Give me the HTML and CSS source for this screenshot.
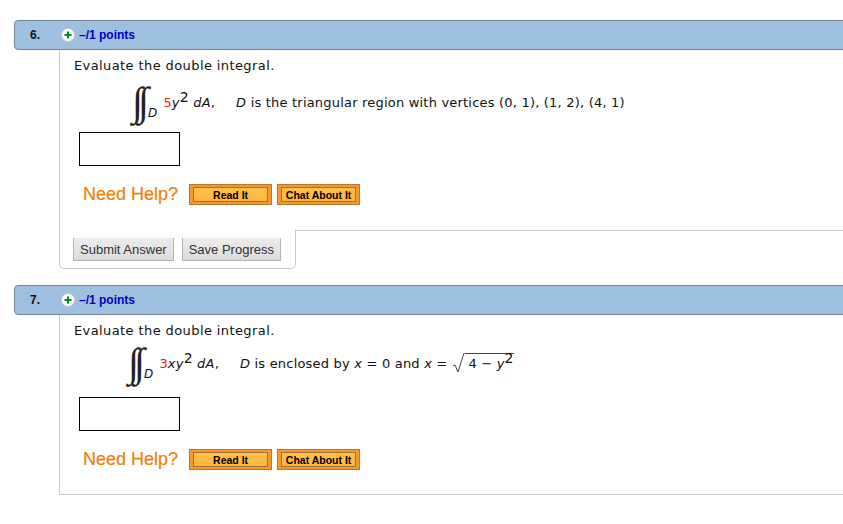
FILE: index.html
```html
<!DOCTYPE html>
<html lang="en">
<head>
    <meta charset="UTF-8">
    <meta name="viewport" content="width=device-width, initial-scale=1.0">
    <title>Double integrals</title>
    <link rel="stylesheet" href="styles.css">
</head>
<body>
    <div class="page">
        <div class="question">
            <div class="question-head">
                <span class="number">6.</span>
                <svg class="plus" width="16" height="16" viewBox="0 0 16 16">
                    <circle cx="8" cy="8" r="6.5" fill="#fff" stroke="#c4ccd4"/>
                    <path d="M8 4.5v7M4.5 8h7" stroke="#0a8a0a" stroke-width="2"/>
                </svg>
                <a class="points" href="#">&ndash;/1 points</a>
            </div>
            <div class="question-body">
                <p class="prompt">Evaluate the double integral.</p>
                <div class="math math-six">
                    <span class="integral">&int;&int;</span>
                    <i class="region">D</i>
                    <span class="integrand"><span class="red">5</span><i>y</i><sup>2</sup> <i>dA</i>,</span>
                    <span class="statement"><i>D</i> is the triangular region with vertices (0, 1), (1, 2), (4, 1)</span>
                </div>
                <input class="answer" type="text">
                <div class="help">
                    <span class="need-help">Need Help?</span>
                    <a class="help-button" href="#"><span>Read It</span></a>
                    <a class="help-button" href="#"><span>Chat About It</span></a>
                </div>
            </div>
            <div class="footer-row">
                <div class="actions">
                    <button>Submit Answer</button>
                    <button>Save Progress</button>
                </div>
                <div class="footer-rest"></div>
            </div>
        </div>

        <div class="question">
            <div class="question-head">
                <span class="number">7.</span>
                <svg class="plus" width="16" height="16" viewBox="0 0 16 16">
                    <circle cx="8" cy="8" r="6.5" fill="#fff" stroke="#c4ccd4"/>
                    <path d="M8 4.5v7M4.5 8h7" stroke="#0a8a0a" stroke-width="2"/>
                </svg>
                <a class="points" href="#">&ndash;/1 points</a>
            </div>
            <div class="question-body closed">
                <p class="prompt">Evaluate the double integral.</p>
                <div class="math math-seven">
                    <span class="integral">&int;&int;</span>
                    <i class="region">D</i>
                    <span class="integrand"><span class="red">3</span><i>xy</i><sup>2</sup> <i>dA</i>,</span>
                    <span class="statement"><i>D</i> is enclosed by <i>x</i> = 0 and <i>x</i> =</span>
                    <svg class="radical" width="13" height="22" viewBox="0 0 13 22">
                        <path d="M1 14l2-1 3 7 6-19" fill="none" stroke="#444" stroke-width="1"/>
                    </svg>
                    <span class="radicand">4 &minus; <i>y</i><sup>2</sup></span>
                </div>
                <input class="answer" type="text">
                <div class="help">
                    <span class="need-help">Need Help?</span>
                    <a class="help-button" href="#"><span>Read It</span></a>
                    <a class="help-button" href="#"><span>Chat About It</span></a>
                </div>
            </div>
        </div>
    </div>
</body>
</html>
```

FILE: styles.css
```css
html, body {
    margin: 0;
    padding: 0;
    background-color: #fff;
    overflow: hidden;
}
.page {
    width: 843px;
    height: 524px;
    overflow: hidden;
    padding: 20px 0 0 14px;
    box-sizing: border-box;
    font-family: "DejaVu Sans", Verdana, sans-serif;
    color: #111;
}
.question {
    width: 840px;
    margin-bottom: 16px;
}
.question-head {
    height: 28px;
    display: flex;
    align-items: center;
    background-color: #9dc0de;
    border: 1px solid #6f87a0;
    border-radius: 4px 0 0 4px;
    font-family: "Liberation Sans", Arial, sans-serif;
    font-size: 12px;
    font-weight: bold;
}
.number {
    width: 45px;
    padding-left: 15px;
    box-sizing: border-box;
    color: #111;
}
.plus {
    margin-right: 3px;
}
.points {
    color: #0000c4;
    text-decoration: none;
}
.question-body {
    margin-left: 45px;
    border-left: 1px solid #c8c8c8;
    padding: 8px 0 0 14px;
    height: 172px;
}
.question-body.closed {
    height: 171px;
    padding-bottom: 0;
    border-bottom: 1px solid #c8c8c8;
}
.prompt {
    margin: 0;
    font-size: 13px;
    line-height: 16px;
    letter-spacing: 0.4px;
}
.math {
    display: flex;
    align-items: center;
    height: 40px;
    font-size: 13px;
    letter-spacing: 0.2px;
}
.math-six {
    margin-top: 8px;
    padding-left: 58px;
}
.math-seven {
    margin-top: 4px;
    padding-left: 54px;
}
.integral {
    font-family: "Liberation Serif", serif;
    font-size: 40px;
    line-height: 40px;
    font-style: italic;
    letter-spacing: -5px;
    font-weight: normal;
    color: #222;
}
.region {
    font-size: 12px;
    margin: 22px 6px 0 4px;
}
.integrand {
    white-space: pre;
    margin-right: 21px;
}
.integrand sup, .radicand sup {
    font-size: 14px;
    line-height: 0;
}
.red {
    color: #e82020;
}
.statement {
    white-space: pre;
    margin-right: 5px;
}
.radicand {
    white-space: pre;
    border-top: 1px solid #444;
    padding: 2px 0 0 3px;
    margin-top: -2px;
}
.answer {
    display: block;
    width: 101px;
    height: 34px;
    box-sizing: border-box;
    margin: 10px 0 0 5px;
    padding: 0;
    border: 1px solid #000;
    background: #fff;
}
.math-seven + .answer {
    margin-top: 14px;
}
.help {
    display: flex;
    align-items: center;
    gap: 5px;
    margin: 18px 0 0 9px;
    height: 21px;
}
.need-help {
    font-family: "Liberation Sans", Arial, sans-serif;
    font-size: 18px;
    font-weight: normal;
    color: #ef8108;
    -webkit-text-stroke: 0.2px #ef8108;
    margin-right: 6px;
}
.help-button {
    display: block;
    width: 83px;
    height: 21px;
    box-sizing: border-box;
    border: 1px solid #b07a35;
    padding: 2px 3px;
    background-color: #f7982e;
    text-decoration: none;
}
.help-button span {
    display: block;
    height: 15px;
    border: 1px solid #a9702a;
    background: linear-gradient(#ffc24a, #ffb53c);
    text-align: center;
    font-family: "Liberation Sans", Arial, sans-serif;
    font-size: 10.5px;
    font-weight: bold;
    line-height: 14px;
    color: #000;
    box-sizing: border-box;
    white-space: nowrap;
}
.footer-row {
    display: flex;
    margin-left: 45px;
    height: 39px;
}
.actions {
    width: 237px;
    box-sizing: border-box;
    padding: 8px 0 0 13px;
    display: flex;
    gap: 8px;
    align-items: flex-start;
    border: 1px solid #c8c8c8;
    border-top: 0;
    border-radius: 0 0 5px 5px;
}
.actions button {
    height: 23px;
    padding: 0 6px;
    background: linear-gradient(#ececec, #dcdcdc);
    border: 1px solid #b4b4b4;
    border-width: 0 1px 1px 1px;
    font-family: "Liberation Sans", Arial, sans-serif;
    font-size: 13px;
    color: #333;
}
.footer-rest {
    flex: 1;
    border-top: 1px solid #c8c8c8;
}
```
